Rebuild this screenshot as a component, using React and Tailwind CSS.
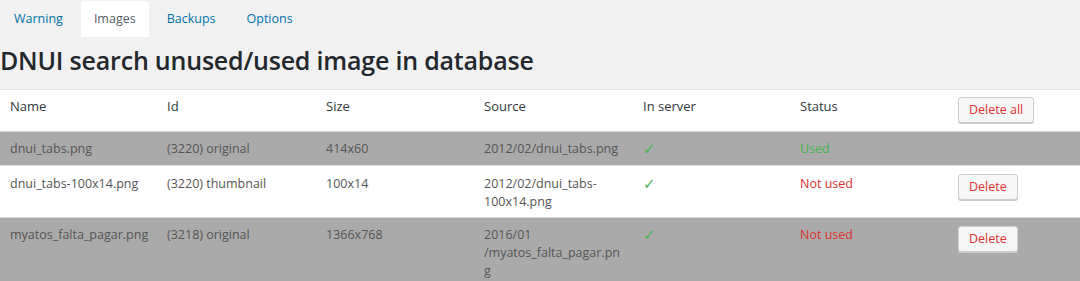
import React from "react";

const cols = ["w-[157px]", "w-[159px]", "w-[158px]", "w-[159px]", "w-[157px]", "w-[158px]", "w-[132px]"];

function Btn({ children }) {
  return (
    <button className="h-[26px] px-[10px] rounded-[3px] border border-[#cccccc] bg-[#f7f7f7] shadow-[0_1px_0_#cccccc] text-[12.5px] leading-[24px] text-[#dc3232]">
      {children}
    </button>
  );
}

function Check() {
  return <span className="text-[#46b450] font-['DejaVu_Sans',sans-serif] text-[15px] leading-[18px]">✓</span>;
}

export default function App() {
  const c = "align-top px-[10px] text-[12.5px] leading-[18px]";
  const r1 = `${c} pt-[8px] pb-[6px]`;
  const r2 = `${c} pt-[9px] pb-[6px]`;
  const r3 = `${c} pt-[8px] pb-[6px]`;
  const th = "align-top px-[10px] pt-[7px] pb-[8px] text-[13px] leading-[18px] font-normal text-left";
  return (
    <div className="w-[1080px] h-[281px] overflow-hidden bg-[#f1f1f1] font-['Open_Sans',sans-serif] text-[#555555]">
      <nav className="flex h-[37px] gap-[5px] pl-[1px] pt-[1px] text-[12.5px]">
        <a className="flex items-center px-[13px] text-[#0073aa]">Warning</a>
        <a className="flex items-center px-[13px] bg-white rounded-t-[4px] text-[#555d66]">Images</a>
        <a className="flex items-center px-[13px] text-[#0073aa]">Backups</a>
        <a className="flex items-center px-[13px] text-[#0073aa]">Options</a>
      </nav>
      <h1 className="h-[52px] flex items-center pb-[4px] text-[25px] font-semibold text-[#23282d] tracking-[-0.2px]">
        DNUI search unused/used image in database
      </h1>
      <table className="table-fixed w-[1080px] border-collapse">
        <colgroup>
          {cols.map((w, i) => (
            <col key={i} className={w} />
          ))}
        </colgroup>
        <thead>
          <tr className="bg-white text-[#32373c] border-t border-[#e5e5e5]">
            <th className={th}>Name</th>
            <th className={th}>Id</th>
            <th className={th}>Size</th>
            <th className={th}>Source</th>
            <th className={th}>In server</th>
            <th className={th}>Status</th>
            <th className={th}>
              <Btn>Delete all</Btn>
            </th>
          </tr>
        </thead>
        <tbody>
          <tr className="bg-[#aaaaaa] border-t border-[#d8d8d8]">
            <td className={r1}>dnui_tabs.png</td>
            <td className={r1}>(3220) original</td>
            <td className={r1}>414x60</td>
            <td className={r1}>2012/02/dnui_tabs.png</td>
            <td className={r1}><Check /></td>
            <td className={`${r1} text-[#46b450]`}>Used</td>
            <td className={r1}></td>
          </tr>
          <tr className="bg-white border-t border-[#e5e5e5]">
            <td className={r2}>dnui_tabs-100x14.png</td>
            <td className={r2}>(3220) thumbnail</td>
            <td className={r2}>100x14</td>
            <td className={r2}>
              <span className="block">2012/02/dnui_tabs-</span>
              <span className="block">100x14.png</span>
            </td>
            <td className={r2}><Check /></td>
            <td className={`${r2} text-[#dc3232]`}>Not used</td>
            <td className={`${c} pt-[8px] pb-[6px]`}><Btn>Delete</Btn></td>
          </tr>
          <tr className="bg-[#aaaaaa] border-t border-[#d8d8d8]">
            <td className={r3}>myatos_falta_pagar.png</td>
            <td className={r3}>(3218) original</td>
            <td className={r3}>1366x768</td>
            <td className={r3}>
              <span className="block">2016/01</span>
              <span className="block">/myatos_falta_pagar.pn</span>
              <span className="block">g</span>
            </td>
            <td className={r3}><Check /></td>
            <td className={`${r3} text-[#dc3232]`}>Not used</td>
            <td className={r3}><Btn>Delete</Btn></td>
          </tr>
        </tbody>
      </table>
    </div>
  );
}
